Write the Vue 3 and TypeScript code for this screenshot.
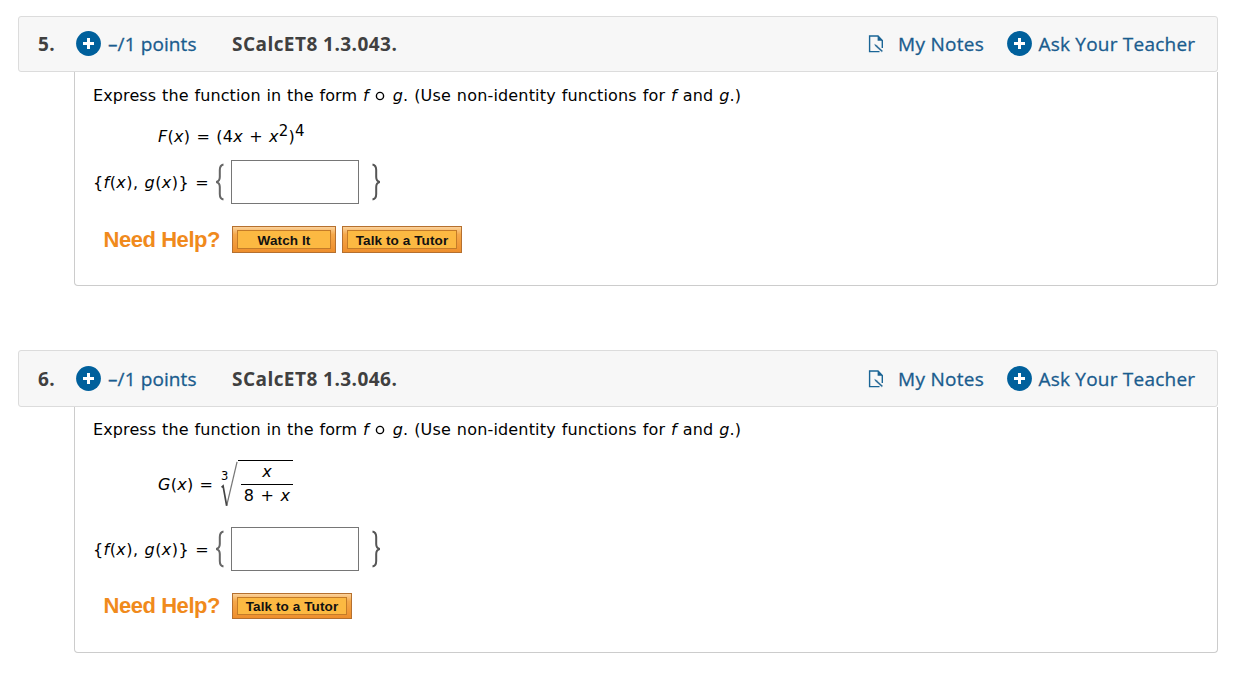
<script setup lang="ts">
interface Question {
  num: number
  code: string
  kind: 'power' | 'root'
  buttons: { label: string; wide: boolean }[]
}

const questions: Question[] = [
  {
    num: 5,
    code: 'SCalcET8 1.3.043.',
    kind: 'power',
    buttons: [
      { label: 'Watch It', wide: false },
      { label: 'Talk to a Tutor', wide: true },
    ],
  },
  {
    num: 6,
    code: 'SCalcET8 1.3.046.',
    kind: 'root',
    buttons: [{ label: 'Talk to a Tutor', wide: true }],
  },
]
</script>

<template>
  <main class="page">
    <section v-for="q in questions" :key="q.num" class="question" :class="q.kind">
      <header class="bar">
        <span class="num">{{ q.num }}.</span>
        <svg class="plus" viewBox="0 0 25 25"><circle cx="12.5" cy="12.5" r="12.4" fill="#00609c" /><path d="M12.5 7v11M7 12.5h11" stroke="#fff" stroke-width="3" /></svg>
        <span class="points">–/1 points</span>
        <span class="code">{{ q.code }}</span>
        <a class="notes">
          <svg class="note-icon" viewBox="0 0 16 18">
            <path d="M14.3 13V5.5L10 1H1.6v15.600h9.900" fill="none" stroke="#1a6596" stroke-width="1.400" />
            <path d="M9.600 1v4.800h4.900z" fill="#1a6090" />
            <path d="M6.600 9.200l.8 1.900 6.300 5.700 1-.9-6.300-5.700z" fill="#1a6090" stroke="#1a6090" stroke-width=".3" />
          </svg>
          <span class="notes-text">My Notes</span>
        </a>
        <a class="ask">
          <svg class="plus" viewBox="0 0 25 25"><circle cx="12.5" cy="12.5" r="12.4" fill="#00609c" /><path d="M12.5 7v11M7 12.5h11" stroke="#fff" stroke-width="3" /></svg>
          <span class="ask-text">Ask Your Teacher</span>
        </a>
      </header>
      <div class="body">
        <p class="prompt"><span class="p1">Express the function in the form <i>f</i></span><svg class="ring" viewBox="0 0 10 10"><circle cx="5" cy="5" r="3.6" fill="none" stroke="#000" stroke-width="1.4" /></svg><span class="p2"><i>g</i>. (Use non-identity functions for <i>f</i> and <i>g</i>.)</span></p>

        <div v-if="q.kind === 'power'" class="formula">
          <span><i>F</i>(<i>x</i>) = (4<i>x</i> + <i>x</i><sup>2</sup>)<sup>4</sup></span>
        </div>
        <div v-else class="formula">
          <span class="lhs"><i>G</i>(<i>x</i>) =</span>
          <span class="index">3</span>
          <svg class="radical" viewBox="0 0 18 49">
            <path d="M6 47L17 .6" fill="none" stroke="#777" stroke-width="1.300" />
            <path d="M.6 27.500L2.200 26l3.800 21" fill="none" stroke="#444" stroke-width="1.800" />
          </svg>
          <span class="radicand">
            <span class="fraction">
              <i class="top">x</i>
              <span class="bottom">8 + <i>x</i></span>
            </span>
          </span>
        </div>

        <div class="answer">
          <span class="set">{<i>f</i>(<i>x</i>), <i>g</i>(<i>x</i>)} =</span>
          <svg class="brace" viewBox="0 0 10 38"><path d="M8.500 1.500C5.600 2 4.800 3.500 4.800 7v7c0 3-.8 4.500-3.600 5 2.800.5 3.600 2 3.600 5v7c0 3.500.8 5 3.700 5.500" fill="none" stroke="#666" stroke-width="2" /></svg>
          <input class="field" type="text" aria-label="Answer" />
          <svg class="brace close" viewBox="0 0 10 38"><path d="M1.500 1.500C4.400 2 5.200 3.500 5.200 7v7c0 3 .8 4.500 3.600 5-2.800.5-3.600 2-3.600 5v7c0 3.500-.8 5-3.700 5.500" fill="none" stroke="#555" stroke-width="2" /></svg>
        </div>

        <div class="help">
          <span class="help-label">Need Help?</span>
          <button v-for="b in q.buttons" :key="b.label" class="btn" :class="{ wide: b.wide }">
            <span class="face">{{ b.label }}</span>
          </button>
        </div>
      </div>
    </section>
  </main>
</template>

<style>
body {
  margin: 0;
  background: #fff;
}
</style>

<style scoped>
.page {
  box-sizing: border-box;
  width: 1218px;
  height: 679px;
  padding: 16px 0 0 18px;
  font-family: "DejaVu Sans", sans-serif;
  font-size: 16px;
  color: #000;
}
.question {
  display: flex;
  flex-direction: column;
  height: 270px;
  margin-bottom: 64px;
}
.question.root {
  height: 303px;
  margin-bottom: 0;
}
.bar {
  box-sizing: border-box;
  flex: none;
  display: flex;
  align-items: center;
  height: 56px;
  padding: 0 0 1px 19px;
  border: 1px solid #dcdcdc;
  border-radius: 3px;
  background: #f7f7f7;
  font-family: "Open Sans", sans-serif;
  font-size: 19px;
  line-height: 24px;
  color: #1a5c8e;
  white-space: nowrap;
}
.root .bar {
  height: 57px;
  padding-bottom: 0;
}
.num,
.code {
  font-weight: 700;
  color: #404040;
}
.num {
  width: 38px;
  letter-spacing: 0.4px;
}
.plus {
  flex: none;
  width: 25px;
  height: 25px;
}
.points {
  width: 124px;
  padding-left: 7px;
  letter-spacing: 0.1px;
}
.points,
.notes-text,
.ask-text {
  -webkit-text-stroke: 0.3px #1a5c8e;
}
.code {
  width: 636px;
  letter-spacing: 0.45px;
}
.notes {
  display: flex;
  align-items: center;
  width: 139px;
  letter-spacing: 0.3px;
}
.note-icon {
  width: 16px;
  height: 18px;
  margin-right: 14px;
}
.ask {
  display: flex;
  align-items: center;
  letter-spacing: 0.22px;
}
.ask-text {
  margin-left: 6.5px;
}
.body {
  box-sizing: border-box;
  flex: 1;
  margin-left: 56px;
  padding: 11px 0 0 18px;
  border: 1px solid #ccc;
  border-top: 0;
  border-radius: 0 0 4px 4px;
}
.root .body {
  padding-top: 10px;
}
.prompt {
  display: flex;
  align-items: center;
  height: 24px;
  margin: 0;
  word-spacing: 0.6px;
  white-space: pre;
}
.p1 {
  letter-spacing: 0.11px;
}
.p2 {
  letter-spacing: 0.17px;
}
.ring {
  width: 10px;
  height: 10px;
  margin: 2px 8px 0 6px;
}
.formula {
  display: flex;
  align-items: center;
  box-sizing: border-box;
  height: 53px;
  padding: 5px 0 0 65px;
  letter-spacing: 0.25px;
  word-spacing: 0.9px;
  white-space: pre;
}
sup {
  font-size: 15px;
  line-height: 0;
  vertical-align: 6px;
}
.root .formula {
  align-items: flex-start;
  height: 86px;
  padding-top: 19px;
}
.lhs {
  width: 63px;
  padding-top: 15px;
  line-height: 20px;
}
.index {
  width: 0;
  padding-top: 10px;
  font-size: 11.5px;
  line-height: 13px;
}
.radical {
  width: 17px;
  height: 49px;
}
.radicand {
  padding-left: 3px;
  border-top: 1px solid #000;
}
.fraction {
  display: flex;
  flex-direction: column;
  align-items: center;
  width: 52px;
}
.top {
  width: 52px;
  height: 23px;
  border-bottom: 1px solid #000;
  text-align: center;
  line-height: 22px;
}
.bottom {
  line-height: 21px;
}
.answer {
  display: flex;
  align-items: center;
  height: 44px;
  letter-spacing: 0.42px;
  word-spacing: 0.7px;
  white-space: pre;
}
.set {
  width: 122px;
}
.brace {
  width: 10px;
  height: 38px;
}
.field {
  box-sizing: border-box;
  width: 128px;
  height: 44px;
  margin: 0 12px 0 6px;
  border: 1px solid #767676;
  background: #fff;
}
.help {
  display: flex;
  align-items: center;
  height: 27px;
  margin-top: 22px;
  padding-left: 10.5px;
  font-family: "Liberation Sans", Arial, sans-serif;
}
.root .help {
  height: 26px;
}
.help-label {
  width: 128.5px;
  font-size: 22px;
  line-height: 26px;
  font-weight: 700;
  letter-spacing: -0.45px;
  color: #f08a1c;
  white-space: nowrap;
}
.btn {
  box-sizing: border-box;
  display: flex;
  width: 104px;
  height: 100%;
  margin: 0 6px 0 0;
  padding: 3px 4px;
  border: 1px solid #b5702f;
  background: linear-gradient(#fbd29b, #f5a84a 30%, #ee8e2c);
  font: 700 13.5px "Liberation Sans", Arial, sans-serif;
  color: #111;
}
.btn.wide {
  width: 120px;
}
.face {
  box-sizing: border-box;
  flex: 1;
  height: 100%;
  border: 1px solid #c47b28;
  background: #fcb942;
  line-height: 19px;
  letter-spacing: 0.1px;
  text-align: center;
  white-space: nowrap;
}
.root .face {
  line-height: 18px;
}
</style>
